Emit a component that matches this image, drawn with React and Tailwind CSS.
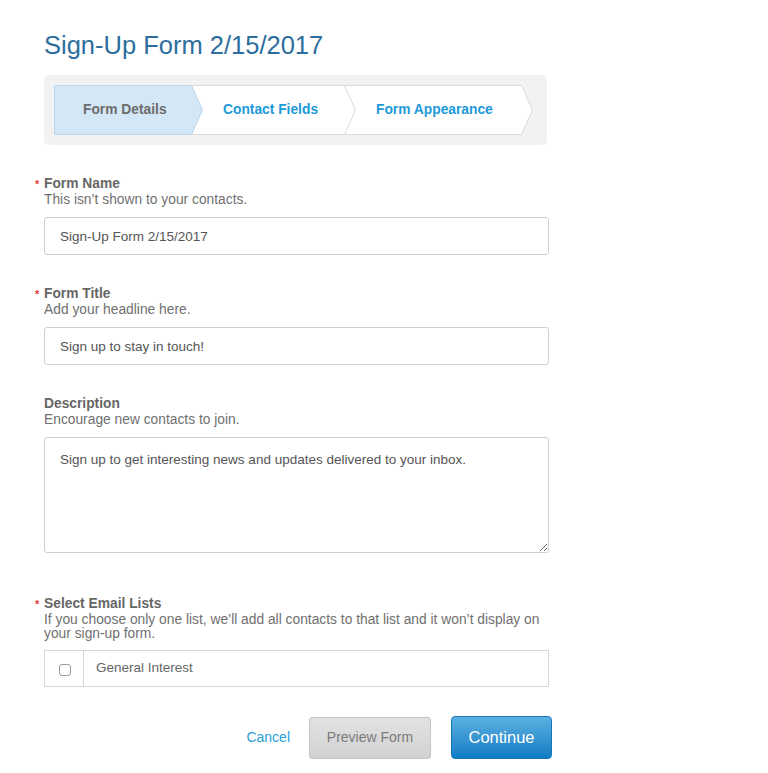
import React from 'react'

const STEPS = [
  { label: 'Form Details', w: 149, active: true, z: 'z-30' },
  { label: 'Contact Fields', w: 164, active: false, z: 'z-20' },
  { label: 'Form Appearance', w: 188, active: false, z: 'z-10' },
]

function Step({ step, first }) {
  const { w, label, active, z } = step
  const pts = `0.5,0.5 ${w - 11.5},0.5 ${w - 0.5},25 ${w - 11.5},49.5 0.5,49.5`
  return (
    <div className={`relative h-[50px] flex items-center ${z} ${first ? '' : '-ml-[11px]'}`} style={{ width: w }}>
      <svg className="absolute inset-0" width={w} height="50" viewBox={`0 0 ${w} 50`}>
        <polygon points={pts} fill={active ? '#d4e7f6' : '#ffffff'} stroke={active ? '#bcd8ee' : '#dadada'} strokeWidth="1" />
      </svg>
      <span
        className={`relative text-[13.8px] font-bold ${active ? 'text-[#6b6b6b] pl-[29px]' : 'text-[#1c9ad8] pl-[31px]'}`}
      >
        {label}
      </span>
    </div>
  )
}

function Field({ label, help, required, children }) {
  return (
    <div>
      <div className="relative text-[13.8px] leading-4 font-bold text-[#666]">
        {required && <span className="absolute -left-[9px] top-0 text-[#e23b3b] text-[11px]">*</span>}
        {label}
      </div>
      <p className="mt-[1px] text-[13.8px] leading-[14px] text-[#707070]">{help}</p>
      <div className="mt-[10px]">{children}</div>
    </div>
  )
}

export default function App() {
  return (
    <div className="min-h-[773px] bg-white pl-[44px] pt-[31px] font-['Liberation_Sans',Arial,sans-serif]">
      <h1 className="text-[25.5px] leading-[28px] text-[#2d6e9e]">Sign-Up Form 2/15/2017</h1>

      {/* Steps */}
      <div className="mt-[16px] w-[503px] h-[70px] bg-[#f2f2f2] rounded-[5px] p-[10px] flex">
        {STEPS.map((s, i) => <Step key={s.label} step={s} first={i === 0} />)}
      </div>

      <div className="w-[505px] mt-[31px]">
        <Field label="Form Name" help="This isn’t shown to your contacts." required>
          <input
            className="w-full h-[38px] border border-[#cfcfcf] rounded-[3px] px-[15px] text-[13.5px] text-[#555] outline-none"
            defaultValue="Sign-Up Form 2/15/2017"
          />
        </Field>

        <div className="mt-[31px]">
          <Field label="Form Title" help="Add your headline here." required>
            <input
              className="w-full h-[38px] border border-[#cfcfcf] rounded-[3px] px-[15px] text-[13.5px] text-[#555] outline-none"
              defaultValue="Sign up to stay in touch!"
            />
          </Field>
        </div>

        <div className="mt-[31px]">
          <Field label="Description" help="Encourage new contacts to join.">
            <textarea
              className="block w-full h-[116px] border border-[#cfcfcf] rounded-[3px] px-[15px] pt-[12px] text-[13.5px] text-[#555] outline-none"
              defaultValue="Sign up to get interesting news and updates delivered to your inbox."
            />
          </Field>
        </div>

        <div className="mt-[43px]">
          <Field
            label="Select Email Lists"
            help="If you choose only one list, we’ll add all contacts to that list and it won’t display on your sign-up form."
            required
          >
            <div className="flex h-[37px] border border-[#d6d6d6] -mt-[1px]">
              <div className="w-[39px] flex items-center justify-center border-r border-[#d6d6d6]">
                <span className="w-[12px] h-[12px] ml-[2px] mt-[2px] rounded-[3px] border border-[#9a9a9a] bg-white" />
              </div>
              <div className="flex items-center pl-[12px] text-[13.5px] text-[#666]">General Interest</div>
            </div>
          </Field>
        </div>

        {/* Actions */}
        <div className="mt-[29px] flex items-center justify-end -mr-[3px]">
          <button className="text-[14px] text-[#2a9fd8] mr-[19px]">Cancel</button>
          <button className="w-[122px] h-[42px] rounded-[3px] border border-[#c4c4c4] bg-gradient-to-b from-[#e2e2e2] to-[#d2d2d2] text-[14px] text-[#7a7a7a]">
            Preview Form
          </button>
          <button className="ml-[20px] w-[101px] h-[43px] rounded-[4px] border border-[#1778b8] bg-gradient-to-b from-[#5ab0e0] to-[#0a7cc4] text-[16.5px] text-white">
            Continue
          </button>
        </div>
      </div>
    </div>
  )
}
